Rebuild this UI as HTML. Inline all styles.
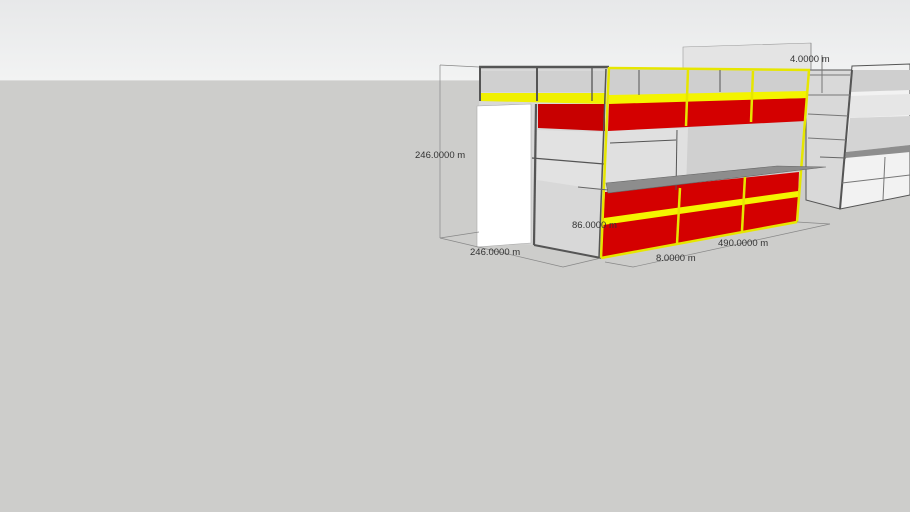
<!DOCTYPE html>
<html><head><style>
html,body{margin:0;padding:0;width:910px;height:512px;overflow:hidden;background:#cdcdcb}
svg{display:block}
text{font-family:"Liberation Sans",sans-serif;font-size:9.5px;fill:#333}
</style></head><body>
<svg width="910" height="512" viewBox="0 0 910 512">
<defs><linearGradient id="sky" x1="0" y1="0" x2="0" y2="1"><stop offset="0" stop-color="#e7e8e9"/><stop offset="1" stop-color="#f2f3f3"/></linearGradient></defs>
<rect width="910" height="80" fill="url(#sky)"/>
<rect y="80" width="910" height="432" fill="#cdcdcb"/>
<line x1="0" y1="80.5" x2="910" y2="80.5" stroke="#dcdcdb"/>

<polygon points="683,47 811,43 811,70 683,70" fill="#e4e4e4" stroke="#999" stroke-width="0.6"/>

<!-- second module -->
<polygon points="806,70 852,70 840,209 806,200" fill="#d9d9d9" stroke="#555" stroke-width="1"/>
<polygon points="852,66 910,64 910,195 840,209" fill="#f2f2f2" stroke="#555" stroke-width="1"/>
<polygon points="852,70 910,70 910,90 851,92" fill="#cfcfcf"/>
<polygon points="850,118 910,116 910,145 846,152" fill="#d4d4d4"/>
<polygon points="850,96 910,94 910,115 848,118" fill="#e6e6e6"/>
<line x1="852" y1="70" x2="840" y2="209" stroke="#555" stroke-width="2"/>
<line x1="808" y1="75" x2="850" y2="75" stroke="#777"/>
<line x1="808" y1="95" x2="850" y2="95" stroke="#777"/>
<line x1="808" y1="114" x2="848" y2="116" stroke="#777"/>
<line x1="808" y1="138" x2="846" y2="140" stroke="#777"/>
<line x1="822" y1="55" x2="822" y2="93" stroke="#777"/>
<polygon points="846,152 910,145 910,152 845,158" fill="#8e8e8e"/>
<line x1="820" y1="157" x2="846" y2="158" stroke="#666"/>
<line x1="842" y1="183" x2="910" y2="175" stroke="#777"/>
<line x1="885" y1="157" x2="883" y2="200" stroke="#777"/>

<!-- left side face -->
<polygon points="479,67 609,67 601,258 534,245 479,240" fill="#d8d8d8"/>
<polygon points="481,71 606,71 605,92 481,92" fill="#d0d0d0"/>
<polygon points="537,130 604,132 602,190 537,180" fill="#e2e2e2"/>
<polygon points="538,104 605,104 605,131 538,128" fill="#c80000"/>
<polygon points="479,93 606,93 606,104 479,101" fill="#f0f000"/>
<g stroke="#555" stroke-width="1.3" fill="none">
<line x1="479" y1="67" x2="609" y2="67" stroke-width="2.5"/>
<line x1="480" y1="67" x2="480" y2="101" stroke-width="2"/>
<line x1="537" y1="68" x2="537" y2="101" stroke-width="2"/>
<line x1="592" y1="68" x2="592" y2="101"/>
<line x1="536" y1="104" x2="534" y2="245" stroke-width="2.2"/>
<line x1="534" y1="245" x2="601" y2="258" stroke-width="2"/>
<line x1="532" y1="158" x2="604" y2="164"/>
</g>
<polygon points="477,106 531,104 531,243 477,247" fill="#ffffff" stroke="#aaa" stroke-width="0.6"/>

<!-- front face -->
<polygon points="609,67 810,70 797,222 601,258" fill="#d0d0d0"/>
<polygon points="610,70 808,72 807,92 609,96" fill="#cfcfcf"/>
<polygon points="608,130 688,128 686,190 604,192" fill="#e0e0e0"/>
<polygon points="609,103 807,98 806,121 608,131" fill="#d40000"/>
<polygon points="609,95 808,91 807,98 609,104" fill="#f4f400"/>
<polygon points="605,192 799,172 797,222 601,258" fill="#d40000"/>
<polygon points="604,218 798,191 798,197 603,225" fill="#f4f400"/>
<g stroke="#e6e600" stroke-width="2.5">
<line x1="688" y1="70" x2="686" y2="126"/>
<line x1="753" y1="71" x2="751" y2="122"/>
<line x1="680" y1="188" x2="677" y2="244"/>
<line x1="745" y1="176" x2="742" y2="231"/>
<line x1="609" y1="67" x2="601" y2="258"/>
<line x1="809" y1="70" x2="797" y2="222"/>
<line x1="601" y1="258" x2="797" y2="222"/>
<line x1="609" y1="68" x2="810" y2="70"/>
</g>
<g stroke="#555" stroke-width="1" fill="none">
<line x1="639" y1="70" x2="639" y2="95"/>
<line x1="720" y1="70" x2="720" y2="92"/>
<line x1="677" y1="130" x2="676" y2="190"/>
<line x1="610" y1="143" x2="676" y2="140"/>
<line x1="606" y1="69" x2="599" y2="258" stroke-width="1.5"/>
</g>
<polygon points="606,183 777,166 826,167 608,193" fill="#8d8d8d" stroke="#666" stroke-width="0.6"/>
<line x1="578" y1="187" x2="608" y2="190" stroke="#666"/>

<g stroke="#888" stroke-width="0.7" fill="none">
<line x1="440" y1="65" x2="440" y2="238"/>
<line x1="440" y1="65" x2="479" y2="67"/>
<line x1="440" y1="238" x2="479" y2="232"/>
<line x1="440" y1="238" x2="563" y2="267"/>
<line x1="563" y1="267" x2="601" y2="258"/>
<line x1="605" y1="262" x2="633" y2="267"/>
<line x1="633" y1="267" x2="830" y2="224"/>
<line x1="797" y1="222" x2="830" y2="224"/>
<line x1="811" y1="43" x2="811" y2="70"/>
</g>
<text x="415" y="158">246.0000 m</text>
<text x="470" y="255">246.0000 m</text>
<text x="572" y="228">86.0000 m</text>
<text x="718" y="246">490.0000 m</text>
<text x="656" y="261">8.0000 m</text>
<text x="790" y="62">4.0000 m</text>
</svg>
</body></html>
